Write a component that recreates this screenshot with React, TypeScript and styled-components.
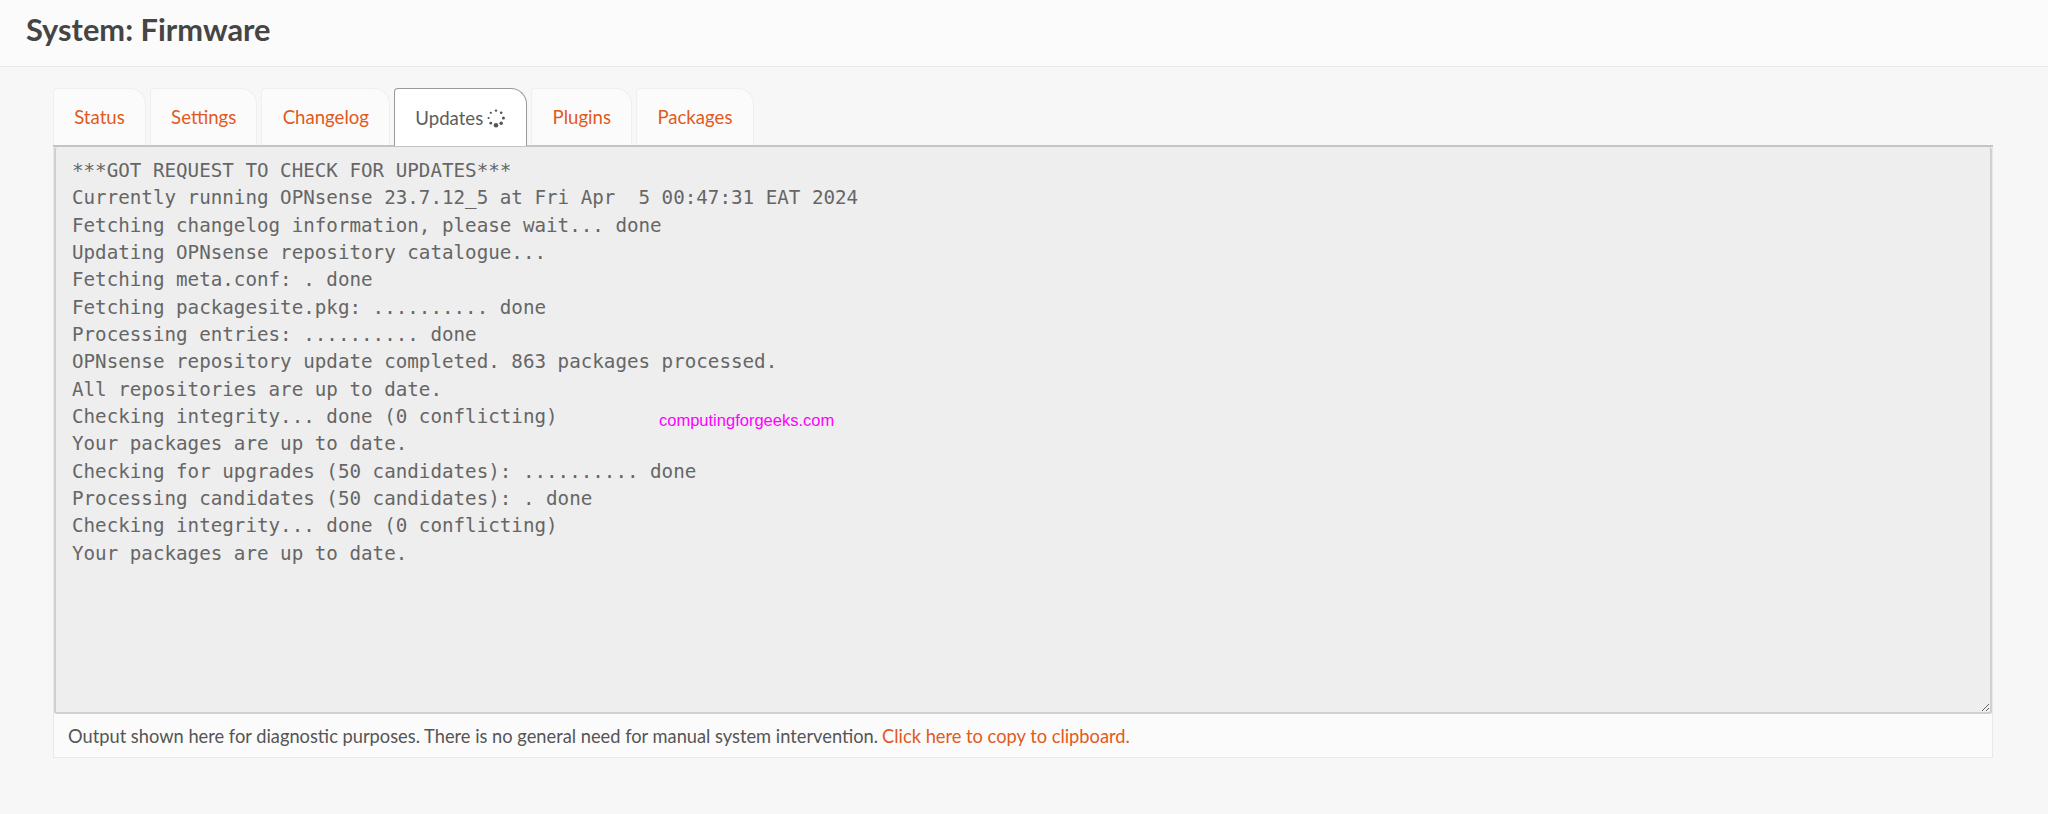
import React from "react";
import styled, { createGlobalStyle } from "styled-components";

const Global = createGlobalStyle`
  html, body { margin: 0; padding: 0; background: #f7f7f7; }
  body { font-family: "Lato", "Noto Sans", sans-serif; color: #555; }
`;

const Page = styled.div`
  width: 2048px;
  height: 814px;
  overflow: hidden;
  background: #f7f7f7;
`;

const Header = styled.header`
  height: 67px;
  box-sizing: border-box;
  background: #fbfbfb;
  border-bottom: 1px solid #e8e8e8;
  padding: 0 26px;
  display: flex;
  align-items: center;
`;

const Title = styled.h1`
  margin: 0 0 8px;
  font-size: 30.8px;
  font-weight: 700;
  color: #454545;
`;

const Main = styled.main`
  padding: 21px 55px 0 53px;
`;

const TabList = styled.nav`
  display: flex;
  gap: 4px;
  height: 57px;
  border-bottom: 2px solid #c4c4c4;
`;

const Tab = styled.a<{ $active?: boolean }>`
  display: flex;
  align-items: center;
  gap: 3px;
  box-sizing: border-box;
  height: ${(p) => (p.$active ? "58px" : "57px")};
  padding: 0 20.2px;
  background: ${(p) => (p.$active ? "#fff" : "#fbfbfb")};
  border: 1px solid ${(p) => (p.$active ? "#9a9a9a" : "#efefef")};
  border-width: ${(p) => (p.$active ? "1.5px 1.5px 0" : "1px 1px 0")};
  border-radius: 4px 16px 0 0;
  font-size: 18.6px;
  color: ${(p) => (p.$active ? "#5c5c5c" : "#e2591d")};
`;

const Spinner = () => (
  <svg width="20" height="20" viewBox="0 0 20 20" fill="#555" aria-hidden="true">
    <circle cx="10" cy="2.6" r="1.2" />
    <circle cx="15.2" cy="4.8" r="1.3" />
    <circle cx="17.4" cy="10" r="1.55" />
    <circle cx="15.2" cy="15.2" r="1.8" />
    <circle cx="10" cy="17.3" r="2.3" />
    <circle cx="4.8" cy="15.2" r="1.4" />
    <circle cx="2.6" cy="10" r="1.1" />
    <circle cx="4.8" cy="4.8" r="1.1" />
  </svg>
);

const Panel = styled.section`
  position: relative;
  display: flex;
  flex-direction: column;
  border: 1px solid #e8e8e8;
  border-top: none;
`;

const Terminal = styled.textarea`
  display: block;
  box-sizing: border-box;
  width: 100%;
  height: 567px;
  margin: 0;
  padding: 10px 16px;
  background: #eee;
  border: 2px solid #d0d0d0;
  border-top-width: 0;
  border-radius: 3px;
  outline: none;
  color: #666;
  font-family: "DejaVu Sans Mono", monospace;
  font-size: 19.22px;
  line-height: 27.33px;
  white-space: pre;
`;

const Watermark = styled.span`
  position: absolute;
  left: 605px;
  top: 263.5px;
  font-family: "Liberation Sans", Arial, sans-serif;
  font-size: 16.5px;
  color: #f0f;
`;

const Note = styled.footer`
  box-sizing: border-box;
  height: 43px;
  display: flex;
  align-items: center;
  padding: 0 14px;
  background: #fbfbfb;
  font-size: 18.27px;
  color: #555;
`;

const NoteLink = styled.a`
  margin-left: 4px;
  color: #e2591d;
`;

const output = `***GOT REQUEST TO CHECK FOR UPDATES***
Currently running OPNsense 23.7.12_5 at Fri Apr  5 00:47:31 EAT 2024
Fetching changelog information, please wait... done
Updating OPNsense repository catalogue...
Fetching meta.conf: . done
Fetching packagesite.pkg: .......... done
Processing entries: .......... done
OPNsense repository update completed. 863 packages processed.
All repositories are up to date.
Checking integrity... done (0 conflicting)
Your packages are up to date.
Checking for upgrades (50 candidates): .......... done
Processing candidates (50 candidates): . done
Checking integrity... done (0 conflicting)
Your packages are up to date.`;

const tabs = ["Status", "Settings", "Changelog", "Updates", "Plugins", "Packages"];

export default function App() {
  return (
    <Page>
      <Global />
      <Header>
        <Title>System: Firmware</Title>
      </Header>
      <Main>
        <TabList>
          {tabs.map((t) => (
            <Tab key={t} $active={t === "Updates"}>
              {t}
              {t === "Updates" && <Spinner />}
            </Tab>
          ))}
        </TabList>
        <Panel>
          <Terminal readOnly spellCheck={false} value={output} />
          <Watermark>computingforgeeks.com</Watermark>
          <Note>
            Output shown here for diagnostic purposes. There is no general need for manual system intervention.
            <NoteLink>Click here to copy to clipboard.</NoteLink>
          </Note>
        </Panel>
      </Main>
    </Page>
  );
}
